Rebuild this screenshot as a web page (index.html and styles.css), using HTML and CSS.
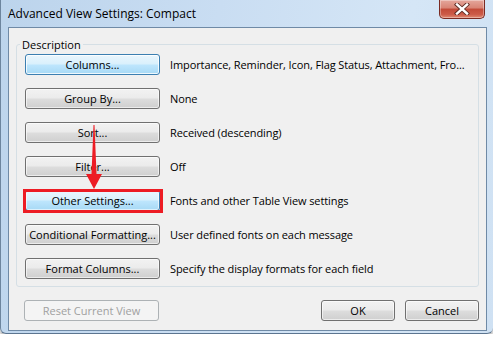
FILE: index.html
```html
<!DOCTYPE html>
<html lang="en">
<head>
    <meta charset="UTF-8">
    <title>Advanced View Settings: Compact</title>
    <link rel="stylesheet" href="styles.css">
</head>
<body>

    <!-- Dialog window -->
    <div class="window">

        <!-- Title bar -->
        <div class="titlebar">
            <span class="title">Advanced View Settings: Compact</span>
            <div class="close-btn">
                <svg width="18" height="12" viewBox="0 0 18 12">
                    <path d="M4 1.5 L14 10.5 M14 1.5 L4 10.5" stroke="#5b2a22" stroke-width="4.2" stroke-linecap="square"/>
                    <path d="M4 1.5 L14 10.5 M14 1.5 L4 10.5" stroke="#ffffff" stroke-width="2.4" stroke-linecap="square"/>
                </svg>
            </div>
        </div>

        <!-- Client area -->
        <div class="client">
            <fieldset class="group">
                <legend>Description</legend>

                <div class="row">
                    <button class="btn btn-default">Columns...</button>
                    <span class="desc">Importance, Reminder, Icon, Flag Status, Attachment, Fro...</span>
                </div>
                <div class="row">
                    <button class="btn">Group By...</button>
                    <span class="desc">None</span>
                </div>
                <div class="row">
                    <button class="btn">Sort...</button>
                    <span class="desc">Received (descending)</span>
                </div>
                <div class="row">
                    <button class="btn">Filter...</button>
                    <span class="desc">Off</span>
                </div>
                <div class="row">
                    <button class="btn btn-hot marked">Other Settings...</button>
                    <span class="desc">Fonts and other Table View settings</span>
                </div>
                <div class="row">
                    <button class="btn">Conditional Formatting...</button>
                    <span class="desc">User defined fonts on each message</span>
                </div>
                <div class="row">
                    <button class="btn">Format Columns...</button>
                    <span class="desc">Specify the display formats for each field</span>
                </div>

                <!-- red pointer arrow -->
                <svg class="arrow" width="20" height="66" viewBox="0 0 20 66">
                    <polygon points="9.5,0 10.5,0 12.5,49 18,49 10,64 2,49 7.5,49" fill="#ed1c24"/>
                </svg>
            </fieldset>

            <div class="footer">
                <button class="btn" disabled>Reset Current View</button>
                <div class="footer-right">
                    <button class="btn btn-small">OK</button>
                    <button class="btn btn-small">Cancel</button>
                </div>
            </div>
        </div>
    </div>

</body>
</html>
```

FILE: styles.css
```css
/* General */
body {
    margin: 0;
    padding: 0;
    background-color: #ffffff;
    font-family: "Open Sans", "Noto Sans", sans-serif;
    font-size: 11px;
    color: #000;
}

/* Window frame */
.window {
    width: 493px;
    height: 334px;
    box-sizing: border-box;
    display: flex;
    flex-direction: column;
    padding: 0 6px 2px 7px;
    background: linear-gradient(100deg, #bcd4ec 0%, #c9ddf2 40%, #d5e6f6 75%, #cfe1f3 100%);
    border-left: 1px solid #6d859e;
    border-bottom: 1px solid #5c7590;
    border-radius: 0 0 6px 6px;
    box-shadow: 0 3px 4px rgba(0, 0, 0, 0.35);
}

/* Title bar */
.titlebar {
    height: 27px;
    display: flex;
    align-items: flex-start;
    justify-content: space-between;
}

.title {
    font-family: "Open Sans", "Noto Sans", sans-serif;
    font-size: 12px;
    margin-top: 5px;
    color: #000;
}

.close-btn {
    width: 46px;
    height: 19px;
    margin-right: 2px;
    box-sizing: border-box;
    display: flex;
    align-items: center;
    justify-content: center;
    background: linear-gradient(#e4a79c 0%, #d88374 45%, #c24a38 50%, #cc5b48 80%, #e08a72 100%);
    border: 1px solid #7a2a22;
    border-top: none;
    border-radius: 0 0 5px 5px;
    box-shadow: inset 0 0 0 1px rgba(255, 255, 255, 0.35);
}

/* Client area */
.client {
    flex: 1;
    background-color: #f0f0f0;
    border: 1px solid #6f8aa6;
    display: flex;
    flex-direction: column;
    padding: 9px 7px 0 7px;
}

/* Group box */
.group {
    position: relative;
    margin: 0;
    padding: 2px 8px 0 8px;
    height: 250px;
    box-sizing: border-box;
    border: 1px solid #d5dfe5;
    border-radius: 3px;
}

.group legend {
    padding: 0 2px;
    margin-left: -5px;
    font-size: 11px;
}

.row {
    display: flex;
    align-items: center;
    height: 21px;
    margin-bottom: 13px;
}

.desc {
    margin-left: 10px;
    white-space: nowrap;
    letter-spacing: -0.1px;
}

/* Buttons */
.btn {
    font-family: "Open Sans", "Noto Sans", sans-serif;
    font-size: 11px;
    color: #000;
    width: 135px;
    height: 21px;
    padding: 0;
    border: 1px solid #707070;
    border-radius: 3px;
    background: linear-gradient(#f2f2f2 0%, #ebebeb 48%, #dddddd 52%, #cfcfcf 100%);
    box-shadow: inset 0 0 0 1px rgba(255, 255, 255, 0.6);
}

.btn-default {
    border-color: #3c7fb1;
    background: linear-gradient(#eaf6fd 0%, #d9f0fc 48%, #bee6fd 52%, #a7d9f5 100%);
    box-shadow: inset 0 0 0 1px rgba(255, 255, 255, 0.8);
}

.btn-hot {
    border-color: #3c7fb1;
    background: linear-gradient(#eaf6fd 0%, #d9f0fc 48%, #bee6fd 52%, #a7d9f5 100%);
}

/* red highlight box drawn over the button */
.marked {
    position: relative;
}

.marked::after {
    content: "";
    position: absolute;
    left: -3px;
    right: -4px;
    top: -2px;
    bottom: -3px;
    border: 3px solid #ed1c24;
}

.btn:disabled {
    color: #a0a0a0;
    border-color: #adb2b5;
    background: #f4f4f4;
    box-shadow: none;
}

.btn-small {
    width: 74px;
}

.arrow {
    position: absolute;
    left: 67px;
    top: 73px;
}

/* Footer */
.footer {
    display: flex;
    justify-content: space-between;
    padding: 13px 0 0 8px;
}

.footer-right {
    display: flex;
    gap: 10px;
}
```
